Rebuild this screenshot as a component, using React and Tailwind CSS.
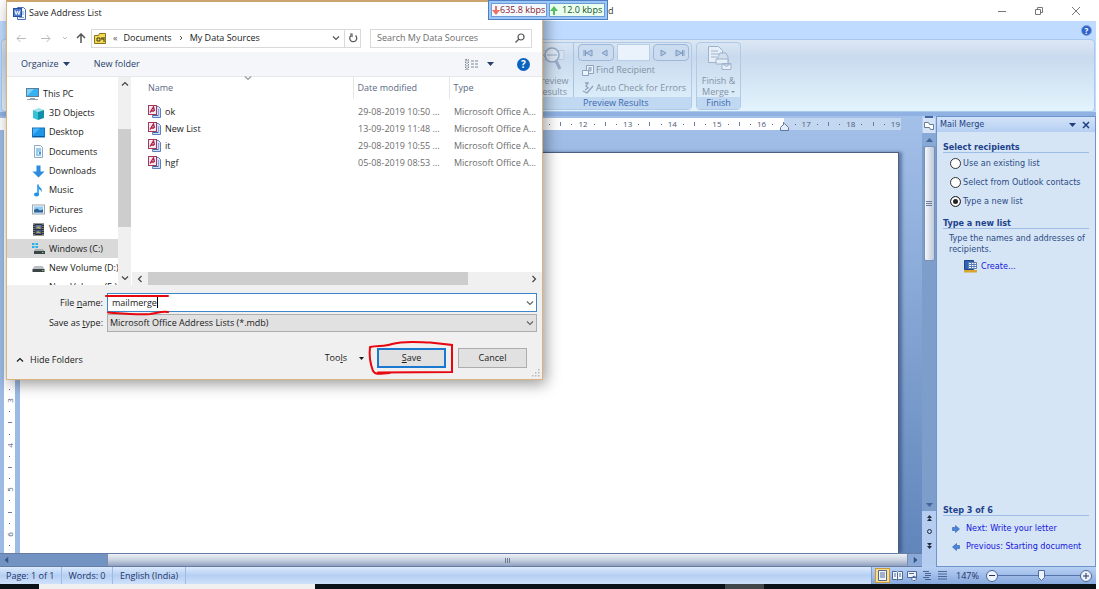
import React, { useState } from "react";
import clsx from "clsx";

const TREE = [
  { label: "This PC", icon: "pc", root: true },
  { label: "3D Objects", icon: "cube" },
  { label: "Desktop", icon: "desktop" },
  { label: "Documents", icon: "doc" },
  { label: "Downloads", icon: "down" },
  { label: "Music", icon: "music" },
  { label: "Pictures", icon: "pic" },
  { label: "Videos", icon: "video" },
  { label: "Windows (C:)", icon: "win", active: true },
  { label: "New Volume (D:)", icon: "drive" },
  { label: "New Volume (E:)", icon: "none" },
];

const FILES = [
  { name: "ok", date: "29-08-2019 10:50 ..." },
  { name: "New List", date: "13-09-2019 11:48 ..." },
  { name: "it", date: "29-08-2019 10:55 ..." },
  { name: "hgf", date: "05-08-2019 08:53 ..." },
];

const treeIcons = {
  pc: (
    <>
      <rect x="0.5" y="1.5" width="12" height="8" fill="#35b0f0" stroke="#5b7f99" />
      <path d="M1 9 L8 2 H1z" fill="#7fd0f8" />
      <path d="M4 11.5h5M1 12.5h11" stroke="#8fa3b0" />
    </>
  ),
  cube: (
    <>
      <path d="M1 3l6-2 5 2-6 2z" fill="#9fe3ea" />
      <path d="M1 3l5 2v8l-5-2z" fill="#35c3d4" />
      <path d="M6 5l6-2v8l-6 2z" fill="#118fa8" />
    </>
  ),
  desktop: (
    <>
      <rect x="0.5" y="2" width="12" height="9" fill="#1d96ea" stroke="#1573bd" />
      <path d="M1 10.5h11" stroke="#0d5796" />
      <path d="M1 9L8 2.5H1z" fill="#4bb2f4" />
    </>
  ),
  doc: (
    <>
      <path d="M2.500 0.500h6l2 2v10h-8z" fill="#f5fbff" stroke="#8fa9bd" />
      <path d="M4 4h5M4 6h5M4 8h2M4 10h5" stroke="#3f97d8" />
      <rect x="7" y="7" width="2" height="2" fill="#3f97d8" />
    </>
  ),
  down: <path d="M4.500 0.500h4v6h4L6.500 12.500 0.500 6.500h4z" fill="#2b8be0" />,
  music: (
    <>
      <path d="M6 0.500c1 3 5 3.500 3.500 8c0-2-1.500-3-3-3.500z" fill="#1c93ea" />
      <path d="M6 0.500v10" stroke="#1c93ea" strokeWidth="1.500" />
      <ellipse cx="4.500" cy="10.500" rx="2.500" ry="2" fill="#1c93ea" />
    </>
  ),
  pic: (
    <>
      <rect x="0.500" y="2" width="12" height="9" fill="#f4f8fb" stroke="#9aa7b2" />
      <rect x="2" y="3.500" width="9" height="6" fill="#8fcbf3" />
      <path d="M2 7l3-1.500 3 2 3-1v3H2z" fill="#2f6496" />
    </>
  ),
  video: (
    <>
      <rect x="1" y="0.500" width="11" height="12" fill="#2d3138" />
      <path d="M2 1v11M11 1v11" stroke="#b9bcc2" strokeDasharray="1 1" />
      <path d="M3.500 2h6v4h-6z" fill="#5877b5" />
      <path d="M3.500 7h6v4h-6z" fill="#3f5b8e" />
      <path d="M4 5l3-2 2 3zM4 10l2-2 3 2z" fill="#c9a63e" />
    </>
  ),
  win: (
    <>
      <path d="M0 1h2.500v2H0zM3.500 1H6v2H3.500zM0 4h2.500v2H0zM3.500 4H6v2H3.500z" fill="#22b3ee" />
      <path d="M3 7h8l1.500 2H2z" fill="#a9b0b3" />
      <rect x="2" y="9" width="11" height="3" fill="#3d4346" />
      <rect x="10" y="10" width="1.500" height="1" fill="#56e07a" />
    </>
  ),
  drive: (
    <>
      <path d="M2.500 5h8L12.500 8H0.500z" fill="#b8bec1" />
      <rect x="0.500" y="8" width="12" height="3" fill="#3d4346" />
      <rect x="10" y="9" width="1.500" height="1" fill="#56e07a" />
    </>
  ),
  none: null,
};

const Caret = ({ className }) => (
  <svg viewBox="0 0 7 4" className={clsx("w-[7px] h-1 shrink-0", className)} fill="currentColor">
    <path d="M0 0h7L3.500 4z" />
  </svg>
);

const Chevron = ({ dir = "down", className }) => {
  const paths = {
    down: "M1 2.500L4 5.500 7 2.500",
    up: "M1 5.500L4 2.500 7 5.500",
    left: "M5.500 1L2.500 4 5.500 7",
    right: "M2.500 1L5.500 4 2.500 7",
  };
  return (
    <svg viewBox="0 0 8 8" className={clsx("w-2 h-2 shrink-0", className)} fill="none" stroke="currentColor" strokeWidth="1.200">
      <path d={paths[dir]} />
    </svg>
  );
};

const WordIcon = () => (
  <svg viewBox="0 0 13 13" className="w-[13px] h-[13px] shrink-0">
    <path d="M4.500 0.500h6l2 2v10h-8z" fill="#f2f7ff" stroke="#4a6fb5" />
    <path d="M9 5h2M9 7h2M6 10.500h5" stroke="#7f9fd6" />
    <rect x="0.500" y="1.500" width="8" height="8" fill="#4f7ed0" stroke="#2a4f9e" />
    <path d="M2 3.500l1.200 4L4.500 4l1.300 3.500L7 3.500" fill="none" stroke="#fff" />
  </svg>
);

const AccessIcon = () => (
  <svg viewBox="0 0 13 13" className="w-[13px] h-[13px] shrink-0">
    <path d="M5.500 1.500h5l2 2v9h-8z" fill="#cfe0fa" stroke="#5c7fc0" />
    <path d="M10.500 4v7" stroke="#84a5de" />
    <rect x="0.500" y="0.500" width="8" height="9" fill="#f8e8ee" stroke="#a03a5a" />
    <path d="M2 7.500L5.500 2l1 4M3 6h3" fill="none" stroke="#ac1f48" strokeWidth="1.300" />
    <path d="M5 10.500h5" stroke="#44659f" />
  </svg>
);

/* ---------- Word window ---------- */

const TitleBar = () => (
  <header className="h-[21px] shrink-0 bg-white flex items-center justify-end">
    <span className="mr-auto pl-[608px] text-[9px] text-[#333]">d</span>
    <div className="flex items-center gap-[25px] pr-[14px] text-[#777]">
      <button aria-label="Minimize" className="w-3 h-4 flex items-center">
        <svg viewBox="0 0 12 12" className="w-3 h-3" stroke="currentColor"><path d="M2 6.500h8" /></svg>
      </button>
      <button aria-label="Restore" className="w-3 h-4 flex items-center">
        <svg viewBox="0 0 12 12" className="w-3 h-3" fill="none" stroke="currentColor">
          <path d="M2.500 4.500h5v5h-5zM4.500 4V2.500h5v5H8" />
        </svg>
      </button>
      <button aria-label="Close" className="w-3 h-4 flex items-center">
        <svg viewBox="0 0 12 12" className="w-3 h-3" stroke="currentColor"><path d="M2 2l8 8M10 2l-8 8" /></svg>
      </button>
    </div>
  </header>
);

const NavPair = ({ left, right, labels }) => (
  <div className="flex w-9 h-[17px] border border-[#9db8d8] rounded-sm bg-[#cbdcf0]">
    {[left, right].map((d, i) => (
      <button key={d} aria-label={labels[i]} className="flex-1 flex items-center justify-center">
        <svg viewBox="0 0 10 8" className="w-[10px] h-2" fill="#b5c8e2" stroke="#7f9abf">
          <path d={d} />
        </svg>
      </button>
    ))}
  </div>
);

const Ribbon = () => (
  <div className="shrink-0 bg-[#bfdbff]">
    <div className="h-[18px] flex items-center justify-end pr-1">
      <button aria-label="Help" className="w-[11px] h-[11px] rounded-full bg-[#2f62c8] border border-[#7fa5e3] text-white text-[8px] leading-[9px] font-bold">
        ?
      </button>
    </div>
    <div className="h-[73px] mx-px border border-[#a8c8ee] rounded-sm bg-linear-to-b from-[#dce7f4] via-[#c9daee] via-25% to-[#e3f4fd] flex pt-0.5 pb-px gap-1">
      <section className="ml-[520px] w-[170px] shrink-0 border border-[#b0c9e5] rounded-sm flex flex-col text-[#8492a6]">
        <div className="flex-1 flex min-h-0">
          <button className="w-[51px] pl-2 pt-0.5 shrink-0 flex flex-col items-center justify-start text-[9px] leading-[11px] border-r border-[#abc3df]">
            <svg viewBox="0 0 26 26" className="w-[26px] h-[26px] mb-1 shrink-0" fill="none" stroke="#97abc7">
              <path d="M1 5.500h24v9H1z" fill="#d5e2f1" stroke="#b7c9df" />
              <circle cx="13" cy="10" r="7" fill="#dde9f6" strokeWidth="1.500" />
              <path d="M17 16l4 8" strokeWidth="3" />
              <path d="M3 8l3 4M8 10h10" />
            </svg>
            Preview Results
          </button>
          <div className="pl-1 pt-px">
            <div className="flex gap-[3px]">
              <NavPair labels={["First record", "Previous record"]} left="M1 1v6M9 1v6L3 4zM2.500 1v6" right="M7 1v6L2 4z" />
              <input aria-label="Record" className="w-[33px] h-[17px] bg-[#eaf3fc] border border-[#b8cde6]" />
              <NavPair labels={["Next record", "Last record"]} left="M3 1v6L8 4z" right="M9 1v6M1 1v6L7 4zM7.500 1v6" />
            </div>
            <button className="flex items-center gap-0.5 h-[18px] pl-1 text-[9px]">
              <svg viewBox="0 0 12 12" className="w-3 h-3" fill="#edf3fa" stroke="#8ea2bf">
                <path d="M4.500 1.500h7v8h-7z M6 4h4M6 6h4M8 3v5" />
                <path d="M0.500 6.500h6v5h-6z" />
              </svg>
              Find Recipient
            </button>
            <button className="flex items-center gap-0.5 h-[17px] pl-1 text-[9px]">
              <svg viewBox="0 0 12 12" className="w-3 h-3" fill="none" stroke="#8ea2bf" strokeWidth="1.300">
                <path d="M3 1h3l-2 3 2 2-3 2M1 9l4 2 6-7" />
              </svg>
              Auto Check for Errors
            </button>
          </div>
        </div>
        <div className="h-3 bg-[#c0d8f1] text-[#3c68ac] text-[9px] leading-3 pl-[60px]">Preview Results</div>
      </section>
      <section className="w-[45px] shrink-0 border border-[#b0c9e5] rounded-sm flex flex-col text-[#8492a6]">
        <button className="flex-1 flex flex-col items-center justify-start text-[9px] leading-[11px] pt-0.5">
          <svg viewBox="0 0 26 26" className="w-[26px] h-[26px] mb-1 shrink-0" fill="#e6eef8" stroke="#9fb2cc">
            <path d="M2.500 1.500h10l4 4v12h-14z" />
            <path d="M5 6h7M5 9h9M5 12h6" />
            <path d="M12 12l2-4h6l2 4v6H11z" fill="#d3dfee" />
            <path d="M10 14h12v5H10z" />
            <path d="M16 18.500h9v6h-9zl4.500 3 4.500-3" />
          </svg>
          Finish &amp;
          <span className="flex items-center gap-0.5">
            Merge
            <svg viewBox="0 0 4 2" className="w-1 h-0.5" fill="currentColor"><path d="M0 0h4L2 2z" /></svg>
          </span>
        </button>
        <div className="h-3 bg-[#c0d8f1] text-[#3c68ac] text-[9px] leading-3 text-center">Finish</div>
      </section>
    </div>
  </div>
);

const Mark = ({ kind }) =>
  kind === "dot" ? <i className="w-px h-px bg-[#55698c]" /> : <i className="w-px h-1 bg-[#6b7c9c]" />;

const HorizontalRuler = () => {
  // four steps per centimetre: dot, tick, dot, number
  const steps = Array.from({ length: 32 }, (_, i) => i);
  return (
    <div className="relative h-3 mt-0.5 flex bg-linear-to-r from-white from-[87%] to-[#c3d7f1] to-[87%] mr-[21px] text-[8px] leading-3 text-[#4a5a78]">
      <div className="ml-auto w-[357px] flex">
        {steps.map((i) => (
          <span key={i} className="flex-1 min-w-0 flex items-center justify-center">
            {i % 4 === 3 ? 12 + (i - 3) / 4 : <Mark kind={i % 4 === 1 ? "tick" : "dot"} />}
          </span>
        ))}
      </div>
      {/* right indent marker */}
      <svg viewBox="0 0 9 8" className="absolute right-[112px] -bottom-px w-[9px] h-2" fill="#e6eefa" stroke="#5d769f">
        <path d="M0.500 7.500v-3L4.500 0.500l4 4v3z" />
      </svg>
    </div>
  );
};

const VerticalRuler = () => (
  <div className="w-[11px] ml-1 mr-[5px] shrink-0 bg-white flex flex-col justify-end pb-0.5">
    <div className="h-[167px] flex flex-col text-[8px] leading-[11px] text-[#4a5a78]">
      {Array.from({ length: 15 }, (_, i) => (
        <span key={i} className="flex-1 min-h-0 flex items-center justify-center">
          {i % 4 === 1 ? (
            <b className="font-normal -rotate-90">{3 + (i - 1) / 4}</b>
          ) : i % 4 === 3 ? (
            <i className="w-1 h-px bg-[#6b7c9c]" />
          ) : (
            <i className="w-px h-px bg-[#55698c]" />
          )}
        </span>
      ))}
    </div>
  </div>
);

const VerticalScroll = () => (
  <div className="w-[14px] shrink-0 flex flex-col items-center bg-[#b4cdf0]">
    <div className="w-2 h-0.5 bg-[#4467a3] shrink-0" />
    <button aria-label="View ruler" className="w-3 h-[15px] shrink-0 flex items-center justify-center bg-[#d5e3f6]">
      <svg viewBox="0 0 10 10" className="w-[10px] h-[10px]" fill="#fff" stroke="#68799a">
        <path d="M0.500 1.500h4l1 2h4v5h-3l-1-2h-5z" />
      </svg>
    </button>
    <div className="flex-1 w-full bg-[#7d9dcb] flex flex-col items-center text-[#42649c]">
      <button aria-label="Scroll up" className="h-[13px] w-full flex items-center justify-center bg-[#88a8d5] shrink-0">
        <Caret className="rotate-180" />
      </button>
      <div className="w-[11px] h-[115px] border border-[#7b92b8] rounded-xs bg-linear-to-r from-[#f3f6fb] to-[#c0cadb] flex flex-col gap-px items-center justify-center">
        <i className="w-1.5 h-px bg-[#6b7b98]" />
        <i className="w-1.5 h-px bg-[#6b7b98]" />
        <i className="w-1.5 h-px bg-[#6b7b98]" />
      </div>
      <button aria-label="Scroll down" className="mt-auto h-3 w-full flex items-center justify-center">
        <Caret />
      </button>
    </div>
    <div className="h-[42px] w-full shrink-0 flex flex-col items-center justify-around text-[#222c40]">
      <button aria-label="Previous page"><svg viewBox="0 0 5 6" className="w-[5px] h-1.5" fill="currentColor"><path d="M0 3L2.500 0 5 3zM0 6L2.500 3 5 6z" /></svg></button>
      <button aria-label="Browse object" className="w-[5px] h-[5px] rounded-full border border-current" />
      <button aria-label="Next page"><svg viewBox="0 0 5 6" className="w-[5px] h-1.5" fill="currentColor"><path d="M0 0h5L2.500 3zM0 3h5L2.500 6z" /></svg></button>
    </div>
    <div className="h-[14px] shrink-0" />
  </div>
);

const HorizontalScroll = () => (
  <div className="h-[14px] shrink-0 flex bg-[#7394c3] border-y border-[#667ea6] text-[#34548c]">
    <button aria-label="Scroll left" className="w-[13px] flex items-center justify-center">
      <Caret className="rotate-90" />
    </button>
    <div className="flex-1 flex pl-[94px]">
      <div className="flex-1 border-x border-[#7b8eae] bg-linear-to-b from-[#edf1f7] via-[#c9d2e0] to-[#8e9fbe] flex items-center justify-center gap-px">
        <i className="w-px h-[5px] bg-[#6b7b98]" />
        <i className="w-px h-[5px] bg-[#6b7b98]" />
        <i className="w-px h-[5px] bg-[#6b7b98]" />
      </div>
    </div>
    <button aria-label="Scroll right" className="w-[14px] flex items-center justify-center bg-[#8aa9d6]">
      <Caret className="-rotate-90" />
    </button>
  </div>
);

const PaneHeading = ({ children }) => (
  <h2 className="h-3 leading-3 font-bold text-[#1d428b] border-b border-[#9dbde6] pr-1">{children}</h2>
);

const RECIPIENT_OPTIONS = ["Use an existing list", "Select from Outlook contacts", "Type a new list"];

const TaskPane = () => {
  const [choice, setChoice] = useState("Type a new list");
  return (
    <aside className="w-[160px] shrink-0 flex flex-col border border-[#6f94cc] bg-[#d6e5f5] font-['DejaVu_Sans_Condensed','DejaVu_Sans',sans-serif] text-[9px] text-[#2b4c86]">
      <div className="h-[15px] shrink-0 flex items-center px-[3px] bg-linear-to-b from-[#d3e3f8] to-[#b5cff2] text-[#1f3f7f]">
        <span className="flex-1">Mail Merge</span>
        <button aria-label="Pane menu"><Caret className="w-2" /></button>
        <button aria-label="Close pane" className="ml-1.5 mr-0.5">
          <svg viewBox="0 0 8 8" className="w-2 h-2" stroke="currentColor" strokeWidth="1.500"><path d="M1 1l6 6M7 1L1 7" /></svg>
        </button>
      </div>
      <div className="flex-1 flex flex-col pl-1.5 pr-1.5 pt-[9px]">
        <PaneHeading>Select recipients</PaneHeading>
        <div className="pl-[7px] pt-px flex flex-col">
          {RECIPIENT_OPTIONS.map((o) => (
            <label key={o} className="h-[19px] flex items-center gap-0.5 whitespace-nowrap">
              <input
                type="radio"
                name="recipients"
                checked={choice === o}
                onChange={() => setChoice(o)}
                className="appearance-none w-[11px] h-[11px] shrink-0 rounded-full border border-[#333] bg-white checked:bg-[#222] checked:shadow-[inset_0_0_0_2px_white]"
              />
              {o}
            </label>
          ))}
        </div>
        <div className="mt-1.5">
          <PaneHeading>Type a new list</PaneHeading>
        </div>
        <p className="pl-1.5 pt-1 leading-[11px]">Type the names and addresses of recipients.</p>
        <a href="#create" className="pl-[21px] mt-[5px] flex items-center gap-1 text-[#1414e0]">
          <svg viewBox="0 0 13 13" className="w-[13px] h-[13px]">
            <path d="M0.500 0.500h9v9h-9z" fill="#2d63b5" stroke="#1f4585" />
            <path d="M4.500 2.500h8v6h-8z" fill="#fff" stroke="#5a7fb8" />
            <path d="M4.500 4.500h8M4.500 6.500h8M7.500 2v6M10 2v6" stroke="#5a7fb8" />
            <path d="M0 10h13v2.500H0z" fill="#d9a52c" />
          </svg>
          Create...
        </a>
        <div className="mt-auto">
          <PaneHeading>Step 3 of 6</PaneHeading>
        </div>
        <nav className="pl-[9px] pt-1 pb-[10px] flex flex-col text-[#1414e0]">
          <a href="#next" className="h-[18px] flex items-center gap-1.5 whitespace-nowrap">
            <svg viewBox="0 0 8 8" className="w-2 h-2" fill="#4a86d8" stroke="#2f5fae" strokeWidth="0.600"><path d="M0.500 2.500h3v-2L7.500 4l-4 3.500v-2h-3z" /></svg>
            Next: Write your letter
          </a>
          <a href="#previous" className="h-[18px] flex items-center gap-1.5 whitespace-nowrap">
            <svg viewBox="0 0 8 8" className="w-2 h-2" fill="#4a86d8" stroke="#2f5fae" strokeWidth="0.600"><path d="M7.500 2.500h-3v-2L0.500 4l4 3.500v-2h3z" /></svg>
            Previous: Starting document
          </a>
        </nav>
      </div>
    </aside>
  );
};

const VIEWS = [
  { label: "Print layout", d: "M1.500 0.500h8v10h-8zM3 3h5M3 5h5M3 7h5", active: true },
  { label: "Reading", d: "M0.500 1.500h4l1 1 1-1h4v8h-4l-1 1-1-1h-4zM5.500 3v7M2 4h2M2 6h2M7 4h2M7 6h2" },
  { label: "Web layout", d: "M0.500 1.500h9v6h-9zM2 3.500h5M5 9.500a2 2 0 1 0 4-2a2 2 0 1 0-4 2" },
  { label: "Outline", d: "M1 1.500h6M3 3.500h6M3 5.500h6M1 7.500h6M3 9.500h6" },
  { label: "Draft", d: "M1 1.500h9M1 4h9M1 6.500h9M1 9h9" },
];

const StatusBar = () => (
  <footer className="h-[17px] shrink-0 flex items-stretch bg-linear-to-b from-[#dceafd] via-[#b5cff2] to-[#cfe1fb] text-[9px] text-[#1f3468]">
    <span className="w-[62px] pl-1.5 flex items-center border-r border-[#9dbbe3]">Page: 1 of 1</span>
    <span className="w-[51px] flex items-center justify-center border-r border-[#9dbbe3]">Words: 0</span>
    <span className="w-[73px] pl-[7px] flex items-center border-r border-[#9dbbe3]">English (India)</span>
    <div className="ml-auto flex items-center bg-linear-to-b from-[#b8d0f4] to-[#87a9dd] border-l border-[#7b9cd0] pl-[3px]">
      {VIEWS.map((v) => (
        <button
          key={v.label}
          aria-label={v.label}
          className={clsx("w-[15px] h-[15px] flex items-center justify-center border", v.active ? "border-[#c79a3b] bg-[#fbdc8a]" : "border-transparent")}
        >
          <svg viewBox="0 0 11 11" className="w-[11px] h-[11px]" fill="#f0f5fd" stroke="#405b8c" strokeWidth="0.900"><path d={v.d} /></svg>
        </button>
      ))}
      <span className="pl-1.5 w-9">147%</span>
      <button aria-label="Zoom out" className="w-3 h-3 rounded-full border border-[#4a6597] bg-[#eef4fd] flex items-center justify-center">
        <i className="w-1.5 h-px bg-[#24355c]" />
      </button>
      <div className="w-[82px] h-full pl-1 flex items-center justify-center bg-[linear-gradient(#5474aa,#5474aa)] bg-[length:100%_1px] bg-center bg-no-repeat">
        <svg viewBox="0 0 7 11" className="w-[7px] h-[11px]" fill="#edf3fc" stroke="#506c9f"><path d="M0.500 0.500h6v7L3.500 10.500 0.500 7.500z" /></svg>
      </div>
      <button aria-label="Zoom in" className="w-3 h-3 mr-1 rounded-full border border-[#4a6597] bg-[#eef4fd] flex items-center justify-center">
        <svg viewBox="0 0 6 6" className="w-1.5 h-1.5" stroke="#24355c"><path d="M0 3h6M3 0v6" /></svg>
      </button>
    </div>
  </footer>
);

/* ---------- Save dialog ---------- */

const AddressBar = () => (
  <div className="h-[28px] flex items-center pl-[9px] pr-[10px] text-[#bbb]">
    <button aria-label="Back" className="w-6">
      <svg viewBox="0 0 11 9" className="w-[11px] h-[9px]" fill="none" stroke="currentColor"><path d="M10 4.500H1M4.500 1L1 4.500 4.500 8" /></svg>
    </button>
    <button aria-label="Forward" className="w-[22px]">
      <svg viewBox="0 0 11 9" className="w-[11px] h-[9px]" fill="none" stroke="currentColor"><path d="M1 4.500h9M6.500 1L10 4.500 6.500 8" /></svg>
    </button>
    <button aria-label="Recent" className="w-[14px]">
      <svg viewBox="0 0 6 6" className="w-1.5 h-1.5" fill="none" stroke="currentColor"><path d="M1 2l2 2 2-2" /></svg>
    </button>
    <button aria-label="Up" className="w-[15px] text-[#555]">
      <svg viewBox="0 0 10 10" className="w-[10px] h-[10px]" fill="none" stroke="currentColor" strokeWidth="1.500"><path d="M5 10V1.500M1 5l4-4 4 4" /></svg>
    </button>
    <div className="flex-1 h-[19px] border border-[#d9d9d9] flex items-center text-[#1a1a1a]">
      <svg viewBox="0 0 13 11" className="w-[13px] h-[11px] ml-0.5 mr-1.5">
        <path d="M0.500 2.500h4l1-2h6v10h-11z" fill="#f5d94f" stroke="#8a7420" />
        <path d="M3 5h3v3H3zM7 6h3v3M7 5h4" fill="none" stroke="#3d3a20" />
      </svg>
      <span className="text-[#555]">«</span>
      <span className="ml-1.5">Documents</span>
      <svg viewBox="0 0 6 6" className="w-1.5 h-1.5 mx-1.5" fill="none" stroke="#555"><path d="M2 1l2 2-2 2" /></svg>
      <span>My Data Sources</span>
      <button aria-label="Previous locations" className="ml-auto mr-1 text-[#555]"><Chevron /></button>
      <button aria-label="Refresh" className="h-full w-4 border-l border-[#d9d9d9] flex items-center justify-center text-[#555]">
        <svg viewBox="0 0 10 10" className="w-[10px] h-[10px]" fill="none" stroke="currentColor" strokeWidth="1.200"><path d="M3 2.500a3.500 3.500 0 1 0 4.500 0M2 1h2v3" /></svg>
      </button>
    </div>
    <label className="ml-[9px] w-[162px] h-[19px] border border-[#d9d9d9] flex items-center px-1.5">
      <input placeholder="Search My Data Sources" aria-label="Search" className="flex-1 min-w-0 outline-none placeholder:text-[#6d6d6d]" />
      <svg viewBox="0 0 10 10" className="w-[10px] h-[10px]" fill="none" stroke="#555" strokeWidth="1.200"><circle cx="6" cy="4" r="3" /><path d="M4 6L0.500 9.500" /></svg>
    </label>
  </div>
);

const FolderTree = () => (
  <div className="flex w-[125px] shrink-0">
    <div className="w-[111px] overflow-hidden h-[208px] pt-[7px]">
      <ul className="h-[213px] flex flex-col">
        {TREE.map((t) => (
          <li
            key={t.label}
            className={clsx("flex-1 min-h-0 flex items-center gap-1 whitespace-nowrap", t.root ? "pl-[19px]" : "pl-[25px]", t.active && "bg-[#d9d9d9]")}
          >
            <svg viewBox="0 0 13 13" className="w-[13px] h-[13px] shrink-0">{treeIcons[t.icon]}</svg>
            {t.label}
          </li>
        ))}
      </ul>
    </div>
    <div className="w-[13px] bg-[#f0f0f0] flex flex-col items-center text-[#444]">
      <Chevron dir="up" className="mt-[3px]" />
      <div className="w-full h-[98px] mt-[41px] bg-[#cdcdcd]" />
      <Chevron className="mt-auto mb-[3px]" />
    </div>
  </div>
);

const FileList = () => (
  <div className="flex-1 min-w-0 flex flex-col">
    <table className="w-full table-fixed text-left">
      <thead className="text-[#5a6a85]">
        <tr className="h-[22px]">
          <th className="font-normal pl-4 relative">
            Name
            <Chevron className="absolute left-[112px] top-[-3px] text-[#999]" />
          </th>
          <th className="w-[96px] font-normal pl-1 border-l border-[#e5e5e5]">Date modified</th>
          <th className="w-[93px] font-normal pl-1 border-l border-[#e5e5e5]">Type</th>
        </tr>
      </thead>
      <tbody className="text-[#6d6d6d] whitespace-nowrap">
        <tr className="h-1" />
        {FILES.map((f) => (
          <tr key={f.name} className="h-[17px]">
            <td className="pl-4 text-[#1a1a1a]">
              <span className="flex items-center gap-1"><AccessIcon />{f.name}</span>
            </td>
            <td className="pl-[5px]">{f.date}</td>
            <td className="pl-[5px]">Microsoft Office A...</td>
          </tr>
        ))}
      </tbody>
    </table>
    <div className="mt-auto h-[13px] bg-[#f0f0f0] flex items-center text-[#444] px-1">
      <Chevron dir="left" />
      <div className="ml-1 w-[320px] h-full bg-[#cdcdcd]" />
      <Chevron dir="right" className="ml-auto" />
    </div>
  </div>
);

const SaveDialog = () => {
  const [fileName, setFileName] = useState("mailmerge");
  return (
    <div
      role="dialog"
      aria-label="Save Address List"
      className="absolute left-[6px] top-0 w-[537px] bg-white border border-[#d9b27c] border-t-2 border-t-[#cba36c] shadow-[3px_4px_14px_rgba(0,0,0,0.4)] text-[9px] leading-3 text-[#1a1a1a]"
    >
      <div className="h-[22px] flex items-center gap-[3px] pl-1.5">
        <WordIcon />
        <span>Save Address List</span>
      </div>
      <AddressBar />
      <div className="h-[25px] bg-[#f4f6f9] border-b border-[#e6e8eb] flex items-center pl-[14px] text-[#28406a]">
        <button className="flex items-center gap-1">Organize <Caret /></button>
        <button className="ml-6">New folder</button>
        <button aria-label="Change view" className="ml-auto mr-[27px] flex items-center gap-2">
          <svg viewBox="0 0 14 11" className="w-[14px] h-[11px]" fill="none" stroke="#7c8794">
            <path d="M0.500 0.500h3v10h-3zM2 1v9" strokeDasharray="1.500 1" />
            <path d="M6 2h3M10 2h3M6 5h3M10 5h3M6 8h3M10 8h3" />
          </svg>
          <Caret />
        </button>
        <button aria-label="Help" className="mr-3 w-[13px] h-[13px] -ml-1 rounded-full bg-[#0b63c0] text-white text-[10px] leading-[13px] font-bold">?</button>
      </div>
      <div className="flex">
        <FolderTree />
        <FileList />
      </div>

      <div className="bg-[#f0f0f0] relative">
        <div className="pt-2 pr-[5px] grid grid-cols-[100px_1fr] gap-y-0.5 items-center">
          <label htmlFor="file-name" className="text-right pr-1">File <u>n</u>ame:</label>
          <div className="h-[19px] bg-white border border-[#3c86c9] flex items-center pr-0.5">
            <input
              id="file-name"
              value={fileName}
              onChange={(e) => setFileName(e.target.value)}
              className="field-sizing-content pl-1 outline-none"
            />
            <i className="w-px h-[11px] bg-black" />
            <Chevron className="ml-auto text-[#666]" />
          </div>
          <label htmlFor="file-type" className="text-right pr-1">Save as <u>t</u>ype:</label>
          <div className="h-[18px] bg-[#e1e1e1] border border-[#adadad] flex items-center pr-0.5">
            <select id="file-type" className="flex-1 appearance-none pl-0.5 outline-none">
              <option>Microsoft Office Address Lists (*.mdb)</option>
            </select>
            <Chevron className="text-[#666]" />
          </div>
        </div>
        <div className="h-[47px] pt-4 pr-[15px] flex items-start">
          <button className="ml-[9px] mt-1.5 flex items-center gap-1.5"><Chevron dir="up" /> Hide Folders</button>
          <button className="ml-auto mr-[13px] h-5 flex items-center gap-3">
            <span>Too<u>l</u>s</span>
            <svg viewBox="0 0 5 3" className="w-[5px] h-[3px]" fill="currentColor"><path d="M0 0h5L2.500 3z" /></svg>
          </button>
          <button className="w-[69px] h-5 bg-[#e1e1e1] border-2 border-[#1a78cf]"><u>S</u>ave</button>
          <button className="ml-3 w-[69px] h-5 bg-[#e1e1e1] border border-[#adadad]">Cancel</button>
        </div>
        <svg viewBox="0 0 8 8" className="absolute right-0.5 bottom-0.5 w-2 h-2" fill="#b8b8b8">
          <path d="M6 0h1.500v1.500H6zM6 3h1.500v1.500H6zM3 3h1.500v1.500H3zM6 6h1.500v1.500H6zM3 6h1.500v1.500H3zM0 6h1.500v1.500H0z" />
        </svg>
        {/* red pen strokes over the form */}
        <svg viewBox="0 0 535 94" className="absolute left-0 top-0 w-[535px] h-[94px] pointer-events-none" fill="none" stroke="#e8060f" strokeWidth="2" strokeLinecap="round">
          <path d="M99 11h62M101 27.500c14 1 30 2.500 42 1.500 8-1 11-3 18-2" />
          <path d="M363 62c8-2 14 0 22-3 12-3.500 24-2 38-1.500l22 2.500v27l-74 0.500M363 62c-1 8 0 16 3 24 3 5 9 2 17 2" />
        </svg>
      </div>
    </div>
  );
};

const SpeedBadge = () => (
  <div className="absolute left-[488px] top-0 h-[20px] p-0.5 flex gap-0.5 bg-[#9cc6f5] border border-[#4d7fc4] text-[9px] leading-3 whitespace-nowrap">
    <span className="flex items-center w-[56px] bg-[#f2f9ff] border border-[#6d9bd6] text-[#8c1f2c]">
      <svg viewBox="0 0 8 9" className="w-2 h-[9px] shrink-0" fill="#ee7060"><path d="M3 0h2v4h3L4 9 0 4h3z" /></svg>
      635.8 kbps
    </span>
    <span className="flex items-center gap-1 w-[56px] bg-[#eaffee] border border-[#6d9bd6] text-[#17552a]">
      <svg viewBox="0 0 8 9" className="w-2 h-[9px] shrink-0" fill="#55bf62"><path d="M3 9h2V5h3L4 0 0 5h3z" /></svg>
      12.0 kbps
    </span>
  </div>
);

export default function App() {
  return (
    <div className="relative h-screen overflow-hidden bg-white font-['Open_Sans','Noto_Sans',sans-serif]">
      <div className="h-full pr-[3px] flex flex-col">
        <TitleBar />
        <Ribbon />
        <div className="h-1 shrink-0 bg-[#8fb2e2]" />
        <main className="flex-1 min-h-0 flex">
          <div className="flex-1 min-w-0 flex flex-col bg-linear-to-b from-[#a3c0e9] to-[#5f84ba]">
            <HorizontalRuler />
            <div className="flex-1 min-h-0 flex">
              <div className="flex bg-[#9cbae4]"><VerticalRuler /></div>
              <div className="flex-1 mt-[22px] mr-[23px] bg-white border-t border-r border-[#4c5f80] shadow-[3px_0_3px_rgba(40,60,100,0.5)]" />
            </div>
            <HorizontalScroll />
          </div>
          <VerticalScroll />
          <TaskPane />
        </main>
        <StatusBar />
        <div className="h-[5px] shrink-0 flex bg-[#0b1319]">
          <div className="ml-[39px] w-[276px] bg-[#f0f0f0]" />
          <div className="ml-[410px] w-[39px] bg-[#42474a]" />
        </div>
      </div>
      <SaveDialog />
      <SpeedBadge />
    </div>
  );
}
